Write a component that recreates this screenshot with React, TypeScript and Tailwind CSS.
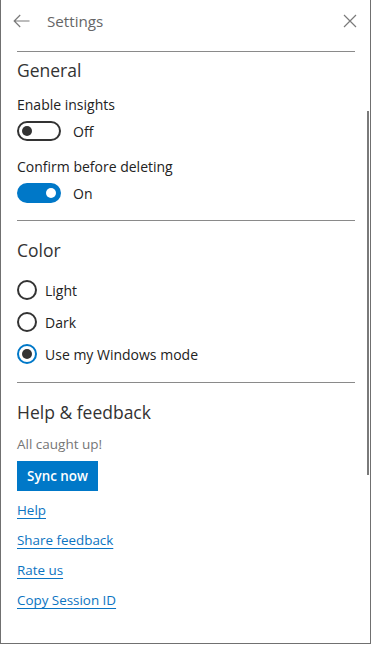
import { FC } from 'react';

const font = { fontFamily: '"Segoe UI", "Open Sans", "Noto Sans", sans-serif' };

const Divider: FC<{ className?: string }> = ({ className = '' }) => (
  <div className={`h-px bg-[#8a8a8a] ${className}`} />
);

const Toggle: FC<{ on: boolean; label: string; className?: string }> = ({ on, label, className = '' }) => (
  <div className={`flex items-center h-[20px] ${className}`}>
    {on ? (
      <div className="w-[44px] h-[20px] rounded-full bg-[#0078c8] flex items-center justify-end pr-[5px]">
        <div className="w-[10px] h-[10px] rounded-full bg-white" />
      </div>
    ) : (
      <div className="w-[44px] h-[20px] rounded-full border-2 border-[#333333] flex items-center pl-[3px]">
        <div className="w-[10px] h-[10px] rounded-full bg-[#333333]" />
      </div>
    )}
    <span className="ml-[12px] text-[14px] text-[#222222]">{label}</span>
  </div>
);

const Radio: FC<{ checked?: boolean; label: string }> = ({ checked, label }) => (
  <div className="flex items-center h-[32px]">
    {checked ? (
      <div className="w-[20px] h-[20px] rounded-full border-2 border-[#0078c8] flex items-center justify-center">
        <div className="w-[10px] h-[10px] rounded-full bg-[#333333]" />
      </div>
    ) : (
      <div className="w-[20px] h-[20px] rounded-full border-2 border-[#333333]" />
    )}
    <span className="ml-[8px] text-[14px] text-[#222222]">{label}</span>
  </div>
);

const Link: FC<{ text: string }> = ({ text }) => (
  <div className="h-[30px] flex items-center">
    <a href="#" className="text-[13.4px] text-[#0b74c2] underline underline-offset-[3px] decoration-[#0b74c2]">
      {text}
    </a>
  </div>
);

export default function App() {
  return (
    <div
      style={font}
      className="relative w-[371px] h-[644px] bg-white border-l border-r border-b border-[#707070] overflow-hidden"
    >
      <div className="flex items-center h-[42px] pl-[12px] pr-[13px]">
        <svg width="17" height="14" viewBox="0 0 17 14" className="text-[#7a7a7a]">
          <path d="M16.5 7H1.2M7.2 1L1.2 7l6 6" fill="none" stroke="currentColor" strokeWidth="1.2" />
        </svg>
        <span className="ml-[17px] text-[15.2px] text-[#666666]">Settings</span>
        <div className="flex-1" />
        <svg width="14" height="14" viewBox="0 0 14 14" className="text-[#7a7a7a]">
          <path d="M1 1l12 12M13 1L1 13" fill="none" stroke="currentColor" strokeWidth="1.2" />
        </svg>
      </div>

      <div className="pl-[16px] pr-[15px]">
        <Divider className="mt-[9px]" />

        <div className="h-[36px] leading-[36px] text-[17.5px] text-[#333333]">General</div>
        <div className="mt-[7px] h-[20px] leading-[20px] text-[14px] text-[#222222]">Enable insights</div>
        <Toggle on={false} label="Off" className="mt-[6px]" />
        <div className="mt-[16px] h-[20px] leading-[20px] text-[14px] text-[#222222]">Confirm before deleting</div>
        <Toggle on label="On" className="mt-[6px]" />

        <Divider className="mt-[17px]" />

        <div className="mt-[11px] h-[36px] leading-[36px] text-[17.5px] text-[#333333]">Color</div>
        <div className="mt-[6px] flex flex-col">
          <Radio label="Light" />
          <Radio label="Dark" />
          <Radio checked label="Use my Windows mode" />
        </div>

        <Divider className="mt-[12px]" />

        <div className="mt-[11px] h-[36px] leading-[36px] text-[17.5px] text-[#333333]">Help &amp; feedback</div>
        <div className="mt-[4px] h-[20px] leading-[20px] text-[13.5px] text-[#767676]">All caught up!</div>
        <button className="mt-[7px] h-[30px] w-[81px] bg-[#0078c8] text-white text-[13.4px] font-semibold">
          Sync now
        </button>
        <div className="mt-[4px] flex flex-col">
          <Link text="Help" />
          <Link text="Share feedback" />
          <Link text="Rate us" />
          <Link text="Copy Session ID" />
        </div>
      </div>

      <div className="absolute left-[366px] top-[111px] w-[2px] h-[364px] bg-[#7a7a7a]" />
    </div>
  );
}
